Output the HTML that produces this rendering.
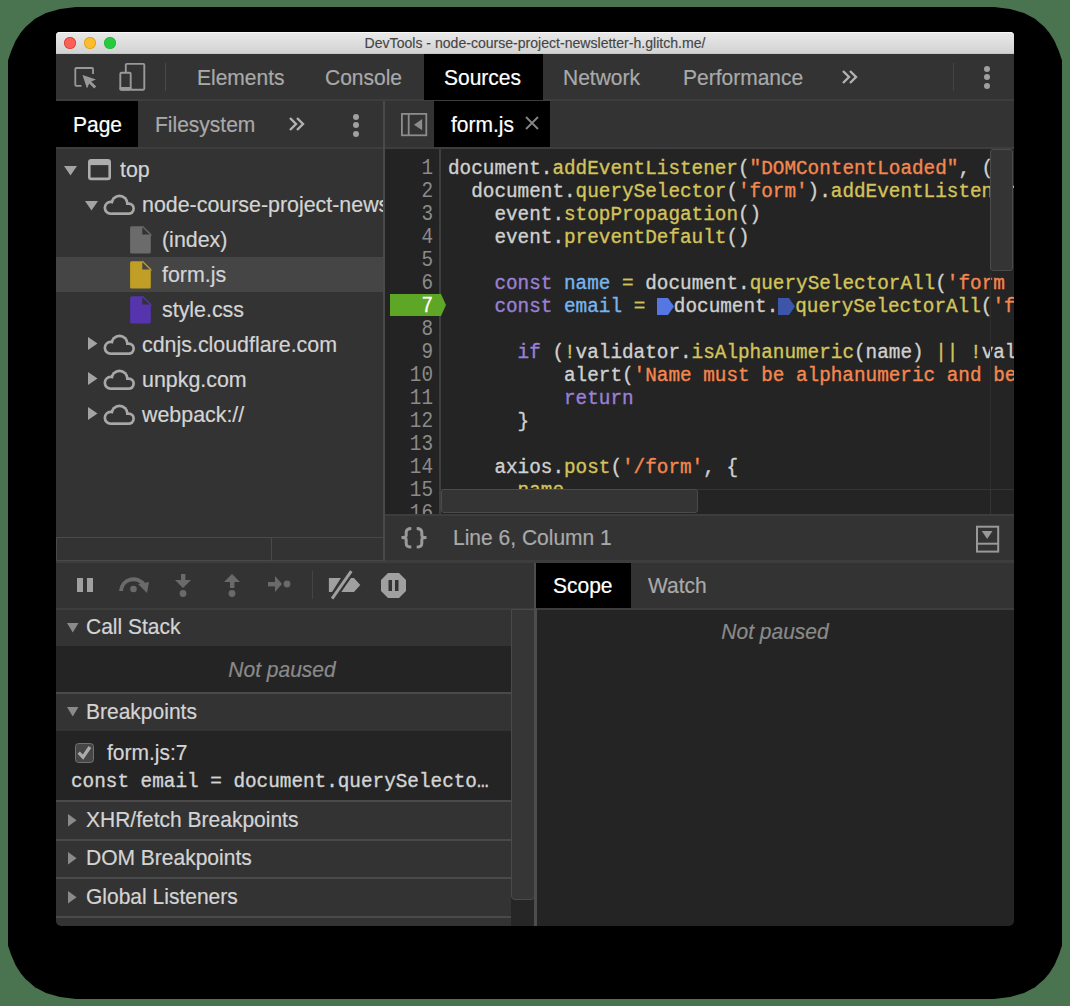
<!DOCTYPE html>
<html><head><meta charset="utf-8"><style>*{margin:0;padding:0;box-sizing:border-box}
html,body{width:1070px;height:1006px;overflow:hidden;background:#4a7450}
.a{position:absolute}
.t{font-family:"Liberation Sans",sans-serif;white-space:nowrap}
.m{font-family:"Liberation Mono",monospace;white-space:pre;-webkit-text-stroke:0.35px}
svg{overflow:visible}
</style></head><body>
<svg class="a" style="left:0;top:0" width="1070" height="1006" viewBox="0 0 1070 1006"><path d="M994.00 7.00 L1010.00 8.90 L1024.00 13.00 L1035.00 18.80 L1044.50 27.00 L1049.50 33.00 L1054.50 41.00 L1059.00 51.50 L1062.00 60.50 L1062.00 945.50 L1059.00 954.50 L1054.50 965.00 L1049.50 973.00 L1044.50 979.00 L1035.00 987.20 L1024.00 993.00 L1010.00 997.10 L994.00 999.00 L76.00 999.00 L60.00 997.10 L46.00 993.00 L35.00 987.20 L25.50 979.00 L20.50 973.00 L15.50 965.00 L11.00 954.50 L8.00 945.50 L8.00 60.50 L11.00 51.50 L15.50 41.00 L20.50 33.00 L25.50 27.00 L35.00 18.80 L46.00 13.00 L60.00 8.90 L76.00 7.00 Z" fill="#000"/></svg>
<div class="a" style="left:56px;top:32px;width:958px;height:894px;background:#242424;border-radius:4px;"></div>
<div class="a" style="left:56px;top:32px;width:958px;height:22px;background:linear-gradient(#e9e9e9,#d2d2d2);border-radius:4px 4px 0 0;box-shadow:inset 0 1px #f7f7f7,inset 0 -1px #c6c6c6;"></div>
<div class="a" style="left:64px;top:37px;width:12px;height:12px;border-radius:50%;background:#fc5f57;box-shadow:inset 0 0 0 0.8px #d0422f"></div>
<div class="a" style="left:84px;top:37px;width:12px;height:12px;border-radius:50%;background:#fdbc2e;box-shadow:inset 0 0 0 0.8px #d7a01d"></div>
<div class="a" style="left:104px;top:37px;width:12px;height:12px;border-radius:50%;background:#28c840;box-shadow:inset 0 0 0 0.8px #24bb3b"></div>
<div class="a t" style="left:56px;top:36px;width:958px;text-align:center;font-size:14.07px;line-height:15px;color:#454545;transform:scaleY(1.07);-webkit-text-stroke:0.15px #454545">DevTools - node-course-project-newsletter-h.glitch.me/</div>
<div class="a" style="left:56px;top:54px;width:958px;height:45px;background:#333;"></div>
<div class="a" style="left:56px;top:99px;width:958px;height:2px;background:#3d3d3d;"></div>
<div class="a" style="left:424px;top:54px;width:119px;height:46px;background:#000;"></div>
<svg class="a" style="left:72px;top:65px" width="26" height="26" viewBox="0 0 26 26">
<path d="M9.5 20.8 H4.3 Q3.3 20.8 3.3 19.8 V4 Q3.3 3 4.3 3 H20 Q21 3 21 4 V9" fill="none" stroke="#999" stroke-width="1.8"/>
<path d="M10.5 10 L24 14.5 L19.2 16.6 L24.2 21.6 L22.2 23.6 L17.2 18.6 L15 23.5 Z" fill="#999"/></svg>
<svg class="a" style="left:118px;top:62px" width="30" height="30" viewBox="0 0 30 30">
<path d="M7.8 10 V3 Q7.8 1.9 8.9 1.9 H25.2 Q26.3 1.9 26.3 3 V26.6 Q26.3 27.7 25.2 27.7 H13" fill="none" stroke="#999" stroke-width="1.9"/>
<rect x="2.3" y="10.8" width="10.4" height="16.9" rx="1.2" fill="none" stroke="#999" stroke-width="1.9"/>
<rect x="1.5" y="25" width="12" height="3.6" rx="1" fill="#999"/></svg>
<div class="a" style="left:165px;top:63px;width:1px;height:28px;background:#4a4a4a;"></div>
<div class="a t " style="left:197px;top:66.00px;font-size:21px;line-height:23.46px;color:#a9a9a9;transform:scaleY(1.07);transform-origin:0 19.00px;-webkit-text-stroke:0.2px #a9a9a9;">Elements</div>
<div class="a t " style="left:325px;top:66.00px;font-size:21px;line-height:23.46px;color:#a9a9a9;transform:scaleY(1.07);transform-origin:0 19.00px;-webkit-text-stroke:0.2px #a9a9a9;">Console</div>
<div class="a t " style="left:444px;top:66.00px;font-size:21px;line-height:23.46px;color:#fff;transform:scaleY(1.07);transform-origin:0 19.00px;-webkit-text-stroke:0.2px #fff;">Sources</div>
<div class="a t " style="left:563px;top:66.00px;font-size:21px;line-height:23.46px;color:#a9a9a9;transform:scaleY(1.07);transform-origin:0 19.00px;-webkit-text-stroke:0.2px #a9a9a9;">Network</div>
<div class="a t " style="left:683px;top:66.00px;font-size:21px;line-height:23.46px;color:#a9a9a9;transform:scaleY(1.07);transform-origin:0 19.00px;-webkit-text-stroke:0.2px #a9a9a9;">Performance</div>
<svg class="a" style="left:841px;top:69px" width="18" height="16" viewBox="0 0 18 16">
<path d="M2 2 L8 8 L2 14 M9 2 L15 8 L9 14" fill="none" stroke="#b2b2b2" stroke-width="2.4"/></svg>
<div class="a" style="left:953px;top:63px;width:1px;height:28px;background:#444;"></div>
<div class="a" style="left:984px;top:65.5px;width:6px;height:6px;border-radius:50%;background:#a0a0a0"></div>
<div class="a" style="left:984px;top:74px;width:6px;height:6px;border-radius:50%;background:#a0a0a0"></div>
<div class="a" style="left:984px;top:82.5px;width:6px;height:6px;border-radius:50%;background:#a0a0a0"></div>
<div class="a" style="left:56px;top:101px;width:327px;height:46px;background:#333;"></div>
<div class="a" style="left:56px;top:147px;width:327px;height:2px;background:#3d3d3d;"></div>
<div class="a" style="left:56px;top:101px;width:82px;height:46px;background:#000;"></div>
<div class="a t " style="left:73px;top:113.00px;font-size:21px;line-height:23.46px;color:#fff;transform:scaleY(1.07);transform-origin:0 19.00px;-webkit-text-stroke:0.2px #fff;">Page</div>
<div class="a t " style="left:155px;top:113.00px;font-size:21px;line-height:23.46px;color:#a9a9a9;transform:scaleY(1.07);transform-origin:0 19.00px;-webkit-text-stroke:0.2px #a9a9a9;">Filesystem</div>
<svg class="a" style="left:288px;top:116px" width="18" height="16" viewBox="0 0 18 16">
<path d="M2 2 L8 8 L2 14 M9 2 L15 8 L9 14" fill="none" stroke="#b2b2b2" stroke-width="2.4"/></svg>
<div class="a" style="left:353px;top:113.5px;width:6px;height:6px;border-radius:50%;background:#a0a0a0"></div>
<div class="a" style="left:353px;top:122px;width:6px;height:6px;border-radius:50%;background:#a0a0a0"></div>
<div class="a" style="left:353px;top:130.5px;width:6px;height:6px;border-radius:50%;background:#a0a0a0"></div>
<div class="a" style="left:56px;top:149px;width:327px;height:388px;background:#333;"></div>
<div class="a" style="left:56px;top:257px;width:327px;height:35px;background:#454545;"></div>
<svg class="a" style="left:64px;top:166px" width="14" height="10" viewBox="0 0 14 10"><path d="M0 0 H13 L6.5 9.5 Z" fill="#a3a3a3"/></svg>
<svg class="a" style="left:88px;top:159px" width="24" height="22" viewBox="0 0 24 22">
<rect x="1.3" y="1.3" width="20.4" height="18.6" rx="2" fill="none" stroke="#adadad" stroke-width="2.6"/><rect x="1.3" y="1.3" width="20.4" height="4.8" fill="#adadad"/></svg>
<div class="a t " style="left:120px;top:158.63px;font-size:21.4px;line-height:23.90px;color:#d4d4d4;transform:scaleY(1.07);transform-origin:0 19.37px;-webkit-text-stroke:0.2px #d4d4d4;">top</div>
<svg class="a" style="left:85px;top:201px" width="14" height="10" viewBox="0 0 14 10"><path d="M0 0 H13 L6.5 9.5 Z" fill="#a3a3a3"/></svg>
<svg class="a" style="left:103px;top:193px" width="33" height="23" viewBox="0 0 33 23"><circle cx="7.7" cy="14.8" r="7.2" fill="#a8a8a8"/><circle cx="16.5" cy="10.9" r="9.3" fill="#a8a8a8"/><circle cx="25.6" cy="15.6" r="6.4" fill="#a8a8a8"/><rect x="7.7" y="12" width="17.9" height="10" fill="#a8a8a8"/><circle cx="7.7" cy="14.8" r="4.5" fill="#333"/><circle cx="16.5" cy="10.9" r="6.6000000000000005" fill="#333"/><circle cx="25.6" cy="15.6" r="3.7" fill="#333"/><rect x="7.7" y="12" width="17.9" height="7.3" fill="#333"/></svg>
<div class="a t " style="left:142px;top:193.63px;font-size:21.4px;line-height:23.90px;color:#d4d4d4;transform:scaleY(1.07);transform-origin:0 19.37px;-webkit-text-stroke:0.2px #d4d4d4;">node-course-project-newsletter-h.glitch.me</div>
<svg class="a" style="left:130px;top:226px" width="22" height="29" viewBox="0 0 22 29">
<path d="M1.5 0.3 H12.3 V8.5 H20.8 V26 Q20.8 27.5 19.3 27.5 H1.5 Q0.1 27.5 0.1 26 V1.8 Q0.1 0.3 1.5 0.3 Z" fill="#6b6b6b"/><path d="M12.3 0.3 L20.8 8.8 V8.5" fill="none" stroke="#6b6b6b" stroke-width="1.3"/></svg>
<div class="a t " style="left:162px;top:228.63px;font-size:21.4px;line-height:23.90px;color:#d4d4d4;transform:scaleY(1.07);transform-origin:0 19.37px;-webkit-text-stroke:0.2px #d4d4d4;">(index)</div>
<svg class="a" style="left:130px;top:261px" width="22" height="29" viewBox="0 0 22 29">
<path d="M1.5 0.3 H12.3 V8.5 H20.8 V26 Q20.8 27.5 19.3 27.5 H1.5 Q0.1 27.5 0.1 26 V1.8 Q0.1 0.3 1.5 0.3 Z" fill="#c19f26"/><path d="M12.3 0.3 L20.8 8.8 V8.5" fill="none" stroke="#c19f26" stroke-width="1.3"/></svg>
<div class="a t " style="left:162px;top:263.63px;font-size:21.4px;line-height:23.90px;color:#d4d4d4;transform:scaleY(1.07);transform-origin:0 19.37px;-webkit-text-stroke:0.2px #d4d4d4;">form.js</div>
<svg class="a" style="left:130px;top:296px" width="22" height="29" viewBox="0 0 22 29">
<path d="M1.5 0.3 H12.3 V8.5 H20.8 V26 Q20.8 27.5 19.3 27.5 H1.5 Q0.1 27.5 0.1 26 V1.8 Q0.1 0.3 1.5 0.3 Z" fill="#5634ad"/><path d="M12.3 0.3 L20.8 8.8 V8.5" fill="none" stroke="#5634ad" stroke-width="1.3"/></svg>
<div class="a t " style="left:162px;top:298.63px;font-size:21.4px;line-height:23.90px;color:#d4d4d4;transform:scaleY(1.07);transform-origin:0 19.37px;-webkit-text-stroke:0.2px #d4d4d4;">style.css</div>
<svg class="a" style="left:88px;top:337px" width="10" height="14" viewBox="0 0 10 14"><path d="M0 0 V13 L9.5 6.5 Z" fill="#a3a3a3"/></svg>
<svg class="a" style="left:103px;top:333px" width="33" height="23" viewBox="0 0 33 23"><circle cx="7.7" cy="14.8" r="7.2" fill="#a8a8a8"/><circle cx="16.5" cy="10.9" r="9.3" fill="#a8a8a8"/><circle cx="25.6" cy="15.6" r="6.4" fill="#a8a8a8"/><rect x="7.7" y="12" width="17.9" height="10" fill="#a8a8a8"/><circle cx="7.7" cy="14.8" r="4.5" fill="#333"/><circle cx="16.5" cy="10.9" r="6.6000000000000005" fill="#333"/><circle cx="25.6" cy="15.6" r="3.7" fill="#333"/><rect x="7.7" y="12" width="17.9" height="7.3" fill="#333"/></svg>
<div class="a t " style="left:142px;top:333.63px;font-size:21.4px;line-height:23.90px;color:#d4d4d4;transform:scaleY(1.07);transform-origin:0 19.37px;-webkit-text-stroke:0.2px #d4d4d4;">cdnjs.cloudflare.com</div>
<svg class="a" style="left:88px;top:372px" width="10" height="14" viewBox="0 0 10 14"><path d="M0 0 V13 L9.5 6.5 Z" fill="#a3a3a3"/></svg>
<svg class="a" style="left:103px;top:368px" width="33" height="23" viewBox="0 0 33 23"><circle cx="7.7" cy="14.8" r="7.2" fill="#a8a8a8"/><circle cx="16.5" cy="10.9" r="9.3" fill="#a8a8a8"/><circle cx="25.6" cy="15.6" r="6.4" fill="#a8a8a8"/><rect x="7.7" y="12" width="17.9" height="10" fill="#a8a8a8"/><circle cx="7.7" cy="14.8" r="4.5" fill="#333"/><circle cx="16.5" cy="10.9" r="6.6000000000000005" fill="#333"/><circle cx="25.6" cy="15.6" r="3.7" fill="#333"/><rect x="7.7" y="12" width="17.9" height="7.3" fill="#333"/></svg>
<div class="a t " style="left:142px;top:368.63px;font-size:21.4px;line-height:23.90px;color:#d4d4d4;transform:scaleY(1.07);transform-origin:0 19.37px;-webkit-text-stroke:0.2px #d4d4d4;">unpkg.com</div>
<svg class="a" style="left:88px;top:407px" width="10" height="14" viewBox="0 0 10 14"><path d="M0 0 V13 L9.5 6.5 Z" fill="#a3a3a3"/></svg>
<svg class="a" style="left:103px;top:403px" width="33" height="23" viewBox="0 0 33 23"><circle cx="7.7" cy="14.8" r="7.2" fill="#a8a8a8"/><circle cx="16.5" cy="10.9" r="9.3" fill="#a8a8a8"/><circle cx="25.6" cy="15.6" r="6.4" fill="#a8a8a8"/><rect x="7.7" y="12" width="17.9" height="10" fill="#a8a8a8"/><circle cx="7.7" cy="14.8" r="4.5" fill="#333"/><circle cx="16.5" cy="10.9" r="6.6000000000000005" fill="#333"/><circle cx="25.6" cy="15.6" r="3.7" fill="#333"/><rect x="7.7" y="12" width="17.9" height="7.3" fill="#333"/></svg>
<div class="a t " style="left:142px;top:403.63px;font-size:21.4px;line-height:23.90px;color:#d4d4d4;transform:scaleY(1.07);transform-origin:0 19.37px;-webkit-text-stroke:0.2px #d4d4d4;">webpack://</div>
<div class="a" style="left:56px;top:537px;width:327px;height:24px;background:#2b2b2b;"></div>
<div class="a" style="left:56px;top:537px;width:215px;height:23px;background:#333;border:1px solid #4a4a4a;border-radius:2px"></div>
<div class="a" style="left:383px;top:101px;width:2px;height:460px;background:#4a4a4a;"></div>
<div class="a" style="left:385px;top:101px;width:629px;height:46px;background:#333;"></div>
<div class="a" style="left:385px;top:147px;width:629px;height:2px;background:#3d3d3d;"></div>
<div class="a" style="left:434px;top:101px;width:116px;height:46px;background:#000;"></div>
<svg class="a" style="left:401px;top:113px" width="28" height="26" viewBox="0 0 28 26">
<rect x="0.9" y="0.9" width="24.4" height="21.4" fill="none" stroke="#8c8c8c" stroke-width="1.8"/><rect x="6.8" y="0.9" width="1.8" height="21.4" fill="#8c8c8c"/>
<path d="M21.2 6 V17.3 L12.9 11.65 Z" fill="#8c8c8c"/></svg>
<div class="a t " style="left:451px;top:113.00px;font-size:21px;line-height:23.46px;color:#fff;transform:scaleY(1.07);transform-origin:0 19.00px;-webkit-text-stroke:0.2px #fff;">form.js</div>
<svg class="a" style="left:525px;top:116px" width="14" height="14" viewBox="0 0 14 14"><path d="M1 1 L13 13 M13 1 L1 13" stroke="#858585" stroke-width="1.9"/></svg>
<div class="a" style="left:385px;top:149px;width:54px;height:365px;background:#232323;"></div>
<div class="a" style="left:439px;top:149px;width:2px;height:365px;background:#3f3f3f;"></div>
<div class="a" style="left:441px;top:149px;width:573px;height:365px;background:#242424;"></div>
<div class="a" style="left:441px;top:149px;width:573px;height:365px;overflow:hidden">
<div class="a m" style="left:7px;top:11.19px;font-size:19.33px;line-height:19.33px"><span style="color:#d0d0d0">document.</span><span style="color:#d3c35a">addEventListener</span><span style="color:#d0d0d0">(</span><span style="color:#f5874f">&quot;DOMContentLoaded&quot;</span><span style="color:#d0d0d0">, (</span></div>
<div class="a m" style="left:7px;top:34.19px;font-size:19.33px;line-height:19.33px"><span style="color:#d0d0d0">  document.</span><span style="color:#d3c35a">querySelector</span><span style="color:#d0d0d0">(</span><span style="color:#f5874f">&#x27;form&#x27;</span><span style="color:#d0d0d0">).</span><span style="color:#d3c35a">addEventListener</span></div>
<div class="a m" style="left:7px;top:57.19px;font-size:19.33px;line-height:19.33px"><span style="color:#d0d0d0">    event.</span><span style="color:#d3c35a">stopPropagation</span><span style="color:#d0d0d0">()</span></div>
<div class="a m" style="left:7px;top:80.19px;font-size:19.33px;line-height:19.33px"><span style="color:#d0d0d0">    event.</span><span style="color:#d3c35a">preventDefault</span><span style="color:#d0d0d0">()</span></div>
<div class="a m" style="left:7px;top:103.19px;font-size:19.33px;line-height:19.33px"></div>
<div class="a m" style="left:7px;top:126.19px;font-size:19.33px;line-height:19.33px"><span style="color:#d0d0d0">    </span><span style="color:#9b80d6">const</span><span style="color:#d0d0d0"> </span><span style="color:#78b4ee">name</span><span style="color:#d0d0d0"> </span><span style="color:#d3c35a">=</span><span style="color:#d0d0d0"> document.</span><span style="color:#d3c35a">querySelectorAll</span><span style="color:#d0d0d0">(</span><span style="color:#f5874f">&#x27;form input[name=&quot;name&quot;]&#x27;</span></div>
<div class="a m" style="left:7px;top:149.19px;font-size:19.33px;line-height:19.33px"><span style="color:#d0d0d0">    </span><span style="color:#9b80d6">const</span><span style="color:#d0d0d0"> </span><span style="color:#78b4ee">email</span><span style="color:#d0d0d0"> </span><span style="color:#d3c35a">=</span><span style="color:#d0d0d0"> </span><span style="display:inline-block;width:17px;height:1px;position:relative"><svg width="17" height="17" viewBox="0 0 17 17" style="position:absolute;left:0;top:-13.5px"><path d="M0 0 H11 L17 8.5 L11 17 H0 Z" fill="#5677e3"/></svg></span><span style="color:#d0d0d0">document.</span><span style="display:inline-block;width:17px;height:1px;position:relative"><svg width="17" height="17" viewBox="0 0 17 17" style="position:absolute;left:0;top:-13.5px"><path d="M0 0 H11 L17 8.5 L11 17 H0 Z" fill="#3c55a8"/></svg></span><span style="color:#d3c35a">querySelectorAll</span><span style="color:#d0d0d0">(</span><span style="color:#f5874f">&#x27;form input[name=&quot;email&quot;]&#x27;</span></div>
<div class="a m" style="left:7px;top:172.19px;font-size:19.33px;line-height:19.33px"></div>
<div class="a m" style="left:7px;top:195.19px;font-size:19.33px;line-height:19.33px"><span style="color:#d0d0d0">      </span><span style="color:#9b80d6">if</span><span style="color:#d0d0d0"> (</span><span style="color:#d3c35a">!</span><span style="color:#d0d0d0">validator.</span><span style="color:#d3c35a">isAlphanumeric</span><span style="color:#d0d0d0">(name) </span><span style="color:#d3c35a">||</span><span style="color:#d0d0d0"> </span><span style="color:#d3c35a">!</span><span style="color:#d0d0d0">validator.</span><span style="color:#d3c35a">isLength</span></div>
<div class="a m" style="left:7px;top:218.19px;font-size:19.33px;line-height:19.33px"><span style="color:#d0d0d0">          alert(</span><span style="color:#f5874f">&#x27;Name must be alphanumeric and be 3 chars&#x27;</span></div>
<div class="a m" style="left:7px;top:241.19px;font-size:19.33px;line-height:19.33px"><span style="color:#d0d0d0">          </span><span style="color:#9b80d6">return</span></div>
<div class="a m" style="left:7px;top:264.19px;font-size:19.33px;line-height:19.33px"><span style="color:#d0d0d0">      }</span></div>
<div class="a m" style="left:7px;top:287.19px;font-size:19.33px;line-height:19.33px"></div>
<div class="a m" style="left:7px;top:310.19px;font-size:19.33px;line-height:19.33px"><span style="color:#d0d0d0">    axios.</span><span style="color:#d3c35a">post</span><span style="color:#d0d0d0">(</span><span style="color:#f5874f">&#x27;/form&#x27;</span><span style="color:#d0d0d0">, {</span></div>
<div class="a m" style="left:7px;top:333.19px;font-size:19.33px;line-height:19.33px"><span style="color:#d0d0d0">      </span><span style="color:#d3c35a">name</span></div>
<div class="a m" style="left:7px;top:356.19px;font-size:19.33px;line-height:19.33px"><span style="color:#d0d0d0">      </span><span style="color:#d3c35a">email</span></div>
</div>
<div class="a m" style="right:637px;top:159.89px;font-size:19.33px;line-height:19.33px;color:#8b8b8b;-webkit-text-stroke:0;transform:scaleY(1.15);transform-origin:0 14.81px">1</div>
<div class="a m" style="right:637px;top:182.89px;font-size:19.33px;line-height:19.33px;color:#8b8b8b;-webkit-text-stroke:0;transform:scaleY(1.15);transform-origin:0 14.81px">2</div>
<div class="a m" style="right:637px;top:205.89px;font-size:19.33px;line-height:19.33px;color:#8b8b8b;-webkit-text-stroke:0;transform:scaleY(1.15);transform-origin:0 14.81px">3</div>
<div class="a m" style="right:637px;top:228.89px;font-size:19.33px;line-height:19.33px;color:#8b8b8b;-webkit-text-stroke:0;transform:scaleY(1.15);transform-origin:0 14.81px">4</div>
<div class="a m" style="right:637px;top:251.89px;font-size:19.33px;line-height:19.33px;color:#8b8b8b;-webkit-text-stroke:0;transform:scaleY(1.15);transform-origin:0 14.81px">5</div>
<div class="a m" style="right:637px;top:274.89px;font-size:19.33px;line-height:19.33px;color:#8b8b8b;-webkit-text-stroke:0;transform:scaleY(1.15);transform-origin:0 14.81px">6</div>
<svg class="a" style="left:390px;top:294px" width="56" height="22" viewBox="0 0 56 22"><path d="M0 0 H51 L56 11 L51 22 H0 Z" fill="#5da626"/></svg>
<div class="a m" style="right:637px;top:297.89px;font-size:19.33px;line-height:19.33px;color:#fff;-webkit-text-stroke:0.3px #fff;transform:scaleY(1.15);transform-origin:0 14.81px">7</div>
<div class="a m" style="right:637px;top:320.89px;font-size:19.33px;line-height:19.33px;color:#8b8b8b;-webkit-text-stroke:0;transform:scaleY(1.15);transform-origin:0 14.81px">8</div>
<div class="a m" style="right:637px;top:343.89px;font-size:19.33px;line-height:19.33px;color:#8b8b8b;-webkit-text-stroke:0;transform:scaleY(1.15);transform-origin:0 14.81px">9</div>
<div class="a m" style="right:637px;top:366.89px;font-size:19.33px;line-height:19.33px;color:#8b8b8b;-webkit-text-stroke:0;transform:scaleY(1.15);transform-origin:0 14.81px">10</div>
<div class="a m" style="right:637px;top:389.89px;font-size:19.33px;line-height:19.33px;color:#8b8b8b;-webkit-text-stroke:0;transform:scaleY(1.15);transform-origin:0 14.81px">11</div>
<div class="a m" style="right:637px;top:412.89px;font-size:19.33px;line-height:19.33px;color:#8b8b8b;-webkit-text-stroke:0;transform:scaleY(1.15);transform-origin:0 14.81px">12</div>
<div class="a m" style="right:637px;top:435.89px;font-size:19.33px;line-height:19.33px;color:#8b8b8b;-webkit-text-stroke:0;transform:scaleY(1.15);transform-origin:0 14.81px">13</div>
<div class="a m" style="right:637px;top:458.89px;font-size:19.33px;line-height:19.33px;color:#8b8b8b;-webkit-text-stroke:0;transform:scaleY(1.15);transform-origin:0 14.81px">14</div>
<div class="a m" style="right:637px;top:481.89px;font-size:19.33px;line-height:19.33px;color:#8b8b8b;-webkit-text-stroke:0;transform:scaleY(1.15);transform-origin:0 14.81px">15</div>
<div class="a m" style="right:637px;top:504.89px;font-size:19.33px;line-height:19.33px;color:#8b8b8b;-webkit-text-stroke:0;transform:scaleY(1.15);transform-origin:0 14.81px">16</div>
<div class="a" style="left:990px;top:149px;width:23px;height:122px;background:#343434;border:1px solid #4b4b4b;border-radius:3px"></div>
<div class="a" style="left:441px;top:489px;width:549px;height:25px;background:#242424;border-top:1px solid #353535"></div>
<div class="a" style="left:990px;top:489px;width:24px;height:25px;background:#242424;border-top:1px solid #353535;border-left:1px solid #353535"></div>
<div class="a" style="left:990px;top:271px;width:1px;height:218px;background:#2e2e2e"></div>
<div class="a" style="left:441px;top:489px;width:257px;height:24px;background:#343434;border:1px solid #4b4b4b;border-radius:3px"></div>
<div class="a" style="left:385px;top:514px;width:629px;height:2px;background:#3d3d3d;"></div>
<div class="a" style="left:385px;top:516px;width:629px;height:44px;background:#333;"></div>
<div class="a" style="left:385px;top:560px;width:629px;height:2px;background:#3d3d3d;"></div>
<svg class="a" style="left:400px;top:527px" width="28" height="22" viewBox="0 0 28 22">
<path d="M11.3 1.5 Q6.2 1.5 6.2 5.5 V8.5 Q6.2 10.5 1.5 10.5 Q6.2 10.5 6.2 12.5 V16.5 Q6.2 20 11.3 20" fill="none" stroke="#999" stroke-width="3"/>
<path d="M16.7 1.5 Q21.8 1.5 21.8 5.5 V8.5 Q21.8 10.5 26.5 10.5 Q21.8 10.5 21.8 12.5 V16.5 Q21.8 20 16.7 20" fill="none" stroke="#999" stroke-width="3"/></svg>
<div class="a t " style="left:453px;top:526.00px;font-size:21px;line-height:23.46px;color:#a9a9a9;transform:scaleY(1.07);transform-origin:0 19.00px;-webkit-text-stroke:0.2px #a9a9a9;">Line 6, Column 1</div>
<svg class="a" style="left:975px;top:525px" width="25" height="28" viewBox="0 0 25 28">
<rect x="2" y="1.7" width="21.2" height="24.9" fill="none" stroke="#999" stroke-width="2"/><rect x="2" y="17.7" width="21.2" height="2" fill="#999"/>
<path d="M6.8 6 H17.5 L12.15 14 Z" fill="#999"/></svg>
<div class="a" style="left:56px;top:537px;width:327px;height:2px;background:#3d3d3d;"></div>
<div class="a" style="left:56px;top:560px;width:327px;height:2px;background:#3d3d3d;"></div>
<div class="a" style="left:56px;top:537px;width:327px;height:24px;background:#333;border-top:1px solid #474747;border-bottom:1px solid #474747;"></div>
<div class="a" style="left:56px;top:537px;width:216px;height:24px;background:#333;border:1px solid #4a4a4a;border-radius:2px"></div>
<div class="a" style="left:383px;top:537px;width:2px;height:25px;background:#4a4a4a;"></div>
<div class="a" style="left:56px;top:561px;width:958px;height:2px;background:#3d3d3d;"></div>
<div class="a" style="left:56px;top:563px;width:479px;height:45px;background:#333;"></div>
<div class="a" style="left:56px;top:608px;width:479px;height:2px;background:#3d3d3d;"></div>
<div class="a" style="left:77px;top:578px;width:6px;height:14px;background:#a0a0a0"></div><div class="a" style="left:87px;top:578px;width:6px;height:14px;background:#a0a0a0"></div>
<svg class="a" style="left:118px;top:574px" width="34" height="22" viewBox="0 0 34 22">
<path d="M3 17 A12.5 12.5 0 0 1 26 11" fill="none" stroke="#6a6a6a" stroke-width="4"/>
<path d="M20 10 L31 8 L29 19 Z" fill="#6a6a6a"/><circle cx="15.5" cy="15" r="3.3" fill="#6a6a6a"/></svg>
<svg class="a" style="left:174px;top:572px" width="18" height="26" viewBox="0 0 18 26">
<rect x="7" y="2" width="4.4" height="8" fill="#6a6a6a"/><path d="M1 8 H17 L9 16 Z" fill="#6a6a6a"/><circle cx="9" cy="21.5" r="3.4" fill="#6a6a6a"/></svg>
<svg class="a" style="left:223px;top:572px" width="18" height="26" viewBox="0 0 18 26">
<path d="M1 10 H17 L9 2 Z" fill="#6a6a6a"/><rect x="7" y="9" width="4.4" height="7" fill="#6a6a6a"/><circle cx="9" cy="21.5" r="3.4" fill="#6a6a6a"/></svg>
<svg class="a" style="left:266px;top:574px" width="26" height="20" viewBox="0 0 26 20">
<rect x="2" y="8" width="8" height="4.4" fill="#6a6a6a"/><path d="M9 2 L16 10 L9 18 Z" fill="#6a6a6a"/><circle cx="21" cy="10" r="3.4" fill="#6a6a6a"/></svg>
<div class="a" style="left:312px;top:571px;width:1px;height:28px;background:#444;"></div>
<svg class="a" style="left:327px;top:569px" width="36" height="33" viewBox="0 0 36 33">
<path d="M1.9 9 H13.9 L5.1 22.9 H1.9 Z" fill="#a0a0a0"/><path d="M24 9 H27 L33.3 15.9 L27 22.9 H14.3 Z" fill="#a0a0a0"/>
<path d="M24.3 2.2 L5.1 29.6" stroke="#a0a0a0" stroke-width="3"/></svg>
<svg class="a" style="left:380px;top:572px" width="27" height="27" viewBox="0 0 27 27">
<path d="M8 1 H19 L26 8 V19 L19 26 H8 L1 19 V8 Z" fill="#a0a0a0"/><rect x="8.5" y="8" width="3.5" height="11" fill="#333"/><rect x="15" y="8" width="3.5" height="11" fill="#333"/></svg>
<div class="a" style="left:56px;top:610px;width:455px;height:36px;background:#333;"></div>
<svg class="a" style="left:67px;top:623px" width="12" height="10" viewBox="0 0 12 10"><path d="M0 0 H11.5 L5.75 9.5 Z" fill="#8a8a8a"/></svg>
<div class="a t " style="left:86px;top:614.79px;font-size:21px;line-height:23.46px;color:#d4d4d4;transform:scaleY(1.07);transform-origin:0 19.00px;-webkit-text-stroke:0.2px #d4d4d4;">Call Stack</div>
<div class="a" style="left:56px;top:646px;width:455px;height:46px;background:#242424;"></div>
<div class="a t " style="left:282px;top:657.50px;font-size:21px;line-height:23.46px;color:#8a8a8a;transform:translateX(-50%) scaleY(1.07);transform-origin:50% 19.00px;-webkit-text-stroke:0.2px #8a8a8a;font-style:italic;">Not paused</div>
<div class="a" style="left:56px;top:692px;width:455px;height:2px;background:#4a4a4a;"></div>
<div class="a" style="left:56px;top:694px;width:455px;height:37px;background:#333;"></div>
<svg class="a" style="left:67px;top:707px" width="12" height="10" viewBox="0 0 12 10"><path d="M0 0 H11.5 L5.75 9.5 Z" fill="#8a8a8a"/></svg>
<div class="a t " style="left:86px;top:699.50px;font-size:21px;line-height:23.46px;color:#d4d4d4;transform:scaleY(1.07);transform-origin:0 19.00px;-webkit-text-stroke:0.2px #d4d4d4;">Breakpoints</div>
<div class="a" style="left:56px;top:731px;width:455px;height:69px;background:#242424;"></div>
<div class="a" style="left:75px;top:743px;width:19px;height:19.5px;background:#464646;border-radius:3.5px;border:1.6px solid #717171"></div>
<svg class="a" style="left:75px;top:743px" width="19" height="19" viewBox="0 0 19 19"><path d="M3.7 9.6 L8 14.1 L14.9 4" fill="none" stroke="#ababab" stroke-width="3.3"/></svg>
<div class="a t " style="left:107px;top:741.00px;font-size:21px;line-height:23.46px;color:#d4d4d4;transform:scaleY(1.07);transform-origin:0 19.00px;-webkit-text-stroke:0.2px #d4d4d4;">form.js:7</div>
<div class="a m" style="left:71px;top:772.69px;font-size:19.33px;line-height:19.33px;color:#d4d4d4">const email = document.querySelecto…</div>
<div class="a" style="left:56px;top:800px;width:455px;height:2px;background:#4a4a4a;"></div>
<div class="a" style="left:56px;top:802px;width:455px;height:37px;background:#333;"></div>
<svg class="a" style="left:68px;top:813.5px" width="10" height="14" viewBox="0 0 10 14"><path d="M0 0 V12.5 L8.6 6.25 Z" fill="#8a8a8a"/></svg>
<div class="a t " style="left:86px;top:807.50px;font-size:21px;line-height:23.46px;color:#d4d4d4;transform:scaleY(1.07);transform-origin:0 19.00px;-webkit-text-stroke:0.2px #d4d4d4;">XHR/fetch Breakpoints</div>
<div class="a" style="left:56px;top:838.5px;width:455px;height:2px;background:#4a4a4a;"></div>
<div class="a" style="left:56px;top:840.5px;width:455px;height:37px;background:#333;"></div>
<svg class="a" style="left:68px;top:852.0px" width="10" height="14" viewBox="0 0 10 14"><path d="M0 0 V12.5 L8.6 6.25 Z" fill="#8a8a8a"/></svg>
<div class="a t " style="left:86px;top:846.00px;font-size:21px;line-height:23.46px;color:#d4d4d4;transform:scaleY(1.07);transform-origin:0 19.00px;-webkit-text-stroke:0.2px #d4d4d4;">DOM Breakpoints</div>
<div class="a" style="left:56px;top:877px;width:455px;height:2px;background:#4a4a4a;"></div>
<div class="a" style="left:56px;top:879px;width:455px;height:37px;background:#333;"></div>
<svg class="a" style="left:68px;top:890.5px" width="10" height="14" viewBox="0 0 10 14"><path d="M0 0 V12.5 L8.6 6.25 Z" fill="#8a8a8a"/></svg>
<div class="a t " style="left:86px;top:884.50px;font-size:21px;line-height:23.46px;color:#d4d4d4;transform:scaleY(1.07);transform-origin:0 19.00px;-webkit-text-stroke:0.2px #d4d4d4;">Global Listeners</div>
<div class="a" style="left:56px;top:916px;width:455px;height:2px;background:#4a4a4a;"></div>
<div class="a" style="left:56px;top:918px;width:455px;height:8px;background:#333;"></div>
<div class="a" style="left:511px;top:610px;width:24px;height:316px;background:#262626;"></div>
<div class="a" style="left:511px;top:609px;width:24px;height:291px;background:#363636;border:1px solid #4a4a4a;border-radius:0 0 4px 4px"></div>
<div class="a" style="left:534px;top:563px;width:3px;height:363px;background:#4d4d4d;"></div>
<div class="a" style="left:537px;top:563px;width:477px;height:45px;background:#333;"></div>
<div class="a" style="left:536px;top:563px;width:95px;height:45px;background:#000;"></div>
<div class="a" style="left:537px;top:608px;width:477px;height:2px;background:#3d3d3d;"></div>
<div class="a t " style="left:553px;top:573.50px;font-size:21px;line-height:23.46px;color:#fff;transform:scaleY(1.07);transform-origin:0 19.00px;-webkit-text-stroke:0.2px #fff;">Scope</div>
<div class="a t " style="left:648px;top:573.50px;font-size:21px;line-height:23.46px;color:#a9a9a9;transform:scaleY(1.07);transform-origin:0 19.00px;-webkit-text-stroke:0.2px #a9a9a9;">Watch</div>
<div class="a" style="left:537px;top:610px;width:477px;height:316px;background:#242424;"></div>
<div class="a t " style="left:775px;top:620.00px;font-size:21px;line-height:23.46px;color:#8a8a8a;transform:translateX(-50%) scaleY(1.07);transform-origin:50% 19.00px;-webkit-text-stroke:0.2px #8a8a8a;font-style:italic;">Not paused</div>
<svg class="a" style="left:56px;top:921px" width="5" height="5" viewBox="0 0 5 5"><path d="M0 0 A5 5 0 0 0 5 5 H0 Z" fill="#000"/></svg>
<svg class="a" style="left:1009px;top:921px" width="5" height="5" viewBox="0 0 5 5"><path d="M5 0 A5 5 0 0 1 0 5 H5 Z" fill="#000"/></svg>
</body></html>
